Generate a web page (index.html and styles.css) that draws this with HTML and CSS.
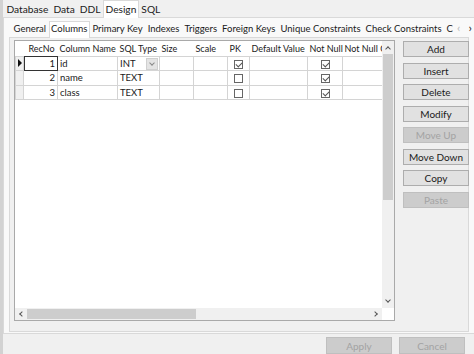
FILE: index.html
```html
<!DOCTYPE html>
<html lang="en">
<head>
    <meta charset="UTF-8">
    <title>Design - Columns</title>
    <link rel="stylesheet" href="styles.css">
</head>
<body>
    <div class="window">
        <div class="top-tabs">
            <span class="tab">Database</span>
            <span class="tab">Data</span>
            <span class="tab">DDL</span>
            <span class="tab active">Design</span>
            <span class="tab">SQL</span>
        </div>

        <div class="page">
            <div class="sub-tabs">
                <span class="tab">General</span>
                <span class="tab active">Columns</span>
                <span class="tab">Primary Key</span>
                <span class="tab">Indexes</span>
                <span class="tab">Triggers</span>
                <span class="tab">Foreign Keys</span>
                <span class="tab">Unique Constraints</span>
                <span class="tab">Check Constraints</span>
                <span class="tab cut">C</span>
                <span class="tab-arrows">
                    <span class="arrow off">&lsaquo;</span>
                    <span class="arrow">&rsaquo;</span>
                </span>
            </div>

            <div class="sub-page">
                <div class="grid">
                    <div class="grid-main">
                        <div class="table-wrap">
                            <table class="cols">
                                <colgroup>
                                    <col style="width: 8px">
                                    <col style="width: 34px">
                                    <col style="width: 60px">
                                    <col style="width: 42px">
                                    <col style="width: 34px">
                                    <col style="width: 34px">
                                    <col style="width: 22px">
                                    <col style="width: 58px">
                                    <col style="width: 35px">
                                    <col style="width: 59px">
                                </colgroup>
                                <thead>
                                    <tr>
                                        <th class="ind"></th>
                                        <th class="c">RecNo</th>
                                        <th>Column Name</th>
                                        <th>SQL Type</th>
                                        <th>Size</th>
                                        <th>Scale</th>
                                        <th>PK</th>
                                        <th>Default Value</th>
                                        <th>Not Null</th>
                                        <th>Not Null Conflict</th>
                                    </tr>
                                </thead>
                                <tbody>
                                    <tr>
                                        <td class="ind"><span class="pointer"></span></td>
                                        <td class="num focus">1</td>
                                        <td>id</td>
                                        <td class="type">INT<span class="drop"></span></td>
                                        <td></td>
                                        <td></td>
                                        <td class="chk"><span class="box on"></span></td>
                                        <td></td>
                                        <td class="chk"><span class="box on"></span></td>
                                        <td></td>
                                    </tr>
                                    <tr>
                                        <td class="ind"></td>
                                        <td class="num">2</td>
                                        <td>name</td>
                                        <td>TEXT</td>
                                        <td></td>
                                        <td></td>
                                        <td class="chk"><span class="box"></span></td>
                                        <td></td>
                                        <td class="chk"><span class="box on"></span></td>
                                        <td></td>
                                    </tr>
                                    <tr>
                                        <td class="ind"></td>
                                        <td class="num">3</td>
                                        <td>class</td>
                                        <td>TEXT</td>
                                        <td></td>
                                        <td></td>
                                        <td class="chk"><span class="box"></span></td>
                                        <td></td>
                                        <td class="chk"><span class="box on"></span></td>
                                        <td></td>
                                    </tr>
                                </tbody>
                            </table>
                        </div>
                        <div class="vscroll">
                            <span class="sarrow up"></span>
                            <div class="vtrack"><div class="vthumb"></div></div>
                            <span class="sarrow down"></span>
                        </div>
                    </div>
                    <div class="hscroll">
                        <span class="harrow left"></span>
                        <div class="htrack"><div class="hthumb"></div></div>
                        <span class="harrow right"></span>
                    </div>
                </div>

                <div class="actions">
                    <button class="btn">Add</button>
                    <button class="btn">Insert</button>
                    <button class="btn">Delete</button>
                    <button class="btn">Modify</button>
                    <button class="btn" disabled>Move Up</button>
                    <button class="btn">Move Down</button>
                    <button class="btn">Copy</button>
                    <button class="btn" disabled>Paste</button>
                </div>
            </div>
        </div>

        <div class="footer">
            <button class="btn wide" disabled>Apply</button>
            <button class="btn wide" disabled>Cancel</button>
        </div>
    </div>
</body>
</html>
```

FILE: styles.css
```css
* {
    margin: 0;
    padding: 0;
    box-sizing: border-box;
}

body {
    font-family: Lato, "Noto Sans", sans-serif;
    font-size: 9.5px;
    color: #1a1a1a;
    background: #f0f0f0;
    width: 474px;
    height: 354px;
    overflow: hidden;
}

.window {
    display: flex;
    flex-direction: column;
    height: 354px;
    border-left: 3px solid #d2d2d2;
}

/* top tab strip */
.top-tabs {
    display: flex;
    align-items: flex-end;
    height: 17px;
    padding-left: 1px;
    font-size: 10.2px;
}

.tab {
    padding: 0 2.5px;
    height: 15px;
    line-height: 14px;
    white-space: nowrap;
}

.top-tabs .tab.active {
    background: #fff;
    height: 18px;
    line-height: 16px;
    padding: 0 1.5px;
    border: 1px solid #d9d9d9;
    border-bottom: none;
    position: relative;
    top: 1px;
}

.page {
    flex: 1;
    display: flex;
    flex-direction: column;
    background: #f9f9f9;
    border: 1px solid #d9d9d9;
    border-right: none;
    padding: 3px 0 1px 5px;
}

/* second tab strip */
.sub-tabs {
    display: flex;
    align-items: flex-end;
    height: 16px;
    padding-left: 2px;
}

.sub-tabs .tab.active {
    background: #fff;
    height: 17px;
    padding: 0 1.5px;
    border: 1px solid #d9d9d9;
    border-bottom: none;
    position: relative;
    top: 1px;
}

.sub-tabs .cut {
    width: 11px;
    overflow: hidden;
}

.tab-arrows {
    display: flex;
    gap: 8px;
    margin-left: 2px;
    height: 15px;
    line-height: 12px;
    font-size: 12px;
}

.arrow.off {
    color: #b8b8b8;
}

.sub-page {
    flex: 1;
    display: flex;
    background: #f0f0f0;
    border: 1px solid #d9d9d9;
    margin-right: 5px;
    padding: 2px 0 10px 4px;
}

/* data grid */
.grid {
    width: 381px;
    display: flex;
    flex-direction: column;
    background: #fff;
    border: 1px solid #a9a9a9;
}

.grid-main {
    flex: 1;
    display: flex;
    min-height: 0;
}

.table-wrap {
    flex: 1;
    overflow: hidden;
}

.cols {
    border-collapse: collapse;
    table-layout: fixed;
    width: 380px;
}

.cols th {
    font-weight: normal;
    font-size: 9px;
    text-align: left;
    height: 15px;
    padding: 0 0 0 2px;
    white-space: nowrap;
    overflow: hidden;
}

.cols th.c {
    text-align: center;
}

.cols td {
    height: 14.5px;
    padding: 0 2px;
    border: 1px solid #d4d4d4;
    white-space: nowrap;
}

.cols td.ind {
    background: #f0f0f0;
    padding: 0;
}

.pointer {
    display: block;
    width: 0;
    height: 0;
    margin-left: 2px;
    border-top: 4px solid transparent;
    border-bottom: 4px solid transparent;
    border-left: 4px solid #111;
}

.cols td.num {
    text-align: right;
}

.cols td.focus {
    outline: 1px solid #333;
    outline-offset: -1px;
}

.cols td.type {
    position: relative;
}

.drop {
    position: absolute;
    right: 1px;
    top: 1px;
    width: 12px;
    height: 12px;
    background: #e4e4e4;
    border: 1px solid #d0d0d0;
}

.drop::after {
    content: "";
    position: absolute;
    left: 3px;
    top: 2px;
    width: 3px;
    height: 3px;
    border-right: 1px solid #888;
    border-bottom: 1px solid #888;
    transform: rotate(45deg);
}

.cols td.chk {
    text-align: center;
}

.box {
    display: inline-block;
    width: 9px;
    height: 9px;
    border: 1px solid #666;
    background: #fff;
    vertical-align: middle;
    position: relative;
}

.box.on::after {
    content: "";
    position: absolute;
    left: 2px;
    top: 0;
    width: 3px;
    height: 5px;
    border-right: 1px solid #555;
    border-bottom: 1px solid #555;
    transform: rotate(45deg);
}

/* scrollbars */
.vscroll {
    width: 12px;
    display: flex;
    flex-direction: column;
    background: #f0f0f0;
}

.sarrow {
    height: 13px;
    position: relative;
}

.sarrow::after,
.harrow::after {
    content: "";
    position: absolute;
    width: 3px;
    height: 3px;
    border-left: 1px solid #555;
    border-top: 1px solid #555;
}

.sarrow.up::after {
    left: 4px;
    top: 6px;
    transform: rotate(45deg);
}

.sarrow.down::after {
    left: 4px;
    top: 3px;
    transform: rotate(225deg);
}

.vtrack {
    flex: 1;
    padding: 0 1px;
}

.vthumb {
    height: 146px;
    background: #cdcdcd;
}

.hscroll {
    height: 12px;
    display: flex;
    align-items: center;
    background: #f0f0f0;
    margin-right: 12px;
}

.harrow {
    width: 12px;
    height: 12px;
    position: relative;
}

.harrow.left::after {
    left: 5px;
    top: 4px;
    transform: rotate(-45deg);
}

.harrow.right::after {
    left: 3px;
    top: 4px;
    transform: rotate(135deg);
}

.htrack {
    flex: 1;
    height: 10px;
}

.hthumb {
    width: 169px;
    height: 10px;
    background: #cdcdcd;
}

/* buttons */
.actions {
    display: flex;
    flex-direction: column;
    gap: 5.5px;
    padding: 1px 0 0 8px;
}

.btn {
    font-family: inherit;
    font-size: 10px;
    color: #1a1a1a;
    width: 66px;
    height: 16px;
    background: #e1e1e1;
    border: 1px solid #adadad;
}

.btn:disabled {
    color: #a3a3a3;
    background: #cccccc;
    border-color: #bfbfbf;
}

.footer {
    height: 20px;
    display: flex;
    justify-content: flex-end;
    align-items: flex-end;
    gap: 7px;
    padding-right: 9px;
}

.btn.wide {
    height: 17px;
}
```
